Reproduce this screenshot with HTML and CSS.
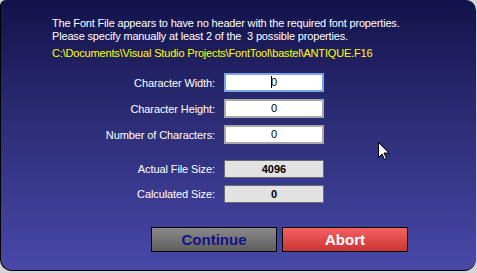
FILE: index.html
```html
<!DOCTYPE html>
<html lang="en">
<head>
  <meta charset="UTF-8">
  <title>Font File Properties</title>
  <link rel="stylesheet" href="styles.css">
</head>
<body>
  <div class='window'>
    <div class='message'>
      <p>The Font File appears to have no header with the required font properties.<br>Please specify manually at least 2 of the&nbsp; 3 possible properties.</p>
      <p class='path'>C:\Documents\Visual Studio Projects\FontTool\bastel\ANTIQUE.F16</p>
    </div>
    <div class='fields'>
      <label>Character Width:</label>
      <div class='input focus'><span class='caret'></span>0</div>
      <label>Character Height:</label>
      <div class='input'>0</div>
      <label>Number of Characters:</label>
      <div class='input'>0</div>
    </div>
    <div class='fields sizes'>
      <label>Actual File Size:</label>
      <div class='readout'>4096</div>
      <label>Calculated Size:</label>
      <div class='readout'>0</div>
    </div>
    <div class='buttons'>
      <button class='btn continue'>Continue</button>
      <button class='btn abort'>Abort</button>
    </div>
    <svg class='cursor' width='12' height='19' viewBox='0 0 12 19'>
      <path d='M0.5 0.5 L0.5 15.5 L4 12 L6.5 17.5 L8.5 16.5 L6 11 L11 11 Z' fill='#fff' stroke='#000' stroke-width='1'/>
    </svg>
  </div>
</body>
</html>
```

FILE: styles.css
```css
body { margin: 0; background: #d4d4d4; width: 477px; height: 273px; overflow: hidden; font-family: "Liberation Sans", Arial, sans-serif; }
.window { position: relative; width: 476px; height: 271px; border-left: 1px solid #000; border-bottom: 1px solid #000; border-radius: 6px 10px 12px 12px; background: linear-gradient(#12124a, #2a2a72 40%, #4848aa); box-sizing: border-box; padding-top: 17px; }
.message { padding-left: 51px; color: #fff; font-size: 11px; line-height: 13px; letter-spacing: -0.17px; }
.message p { margin: 0; }
.message .path { color: #ffff00; margin-top: 4px; }
.fields { display: grid; grid-template-columns: 163px 100px; column-gap: 9px; row-gap: 7px; padding-left: 51px; margin-top: 13px; align-items: center; }
.fields label { color: #fff; font-size: 11px; text-align: right; letter-spacing: -0.1px; }
.input { height: 19px; box-sizing: border-box; border: 2px solid #a8a8a8; background: #fff; font-size: 11px; text-align: center; line-height: 15px; color: #000; }
.input.focus { border-color: #7ba4e4; }
.caret { display: inline-block; width: 1px; height: 12px; background: #000; vertical-align: -2px; margin-right: -1px; }
.sizes { margin-top: 16px; row-gap: 7px; }
.readout { height: 18px; box-sizing: border-box; border: 1px solid #6a6a6a; background: #e2e2e2; font-size: 11px; font-weight: bold; text-align: center; line-height: 16px; color: #000; }
.buttons { display: flex; gap: 5px; padding-left: 150px; margin-top: 24px; }
.btn { width: 126px; height: 25px; border: 1px solid #000; font-family: "Liberation Sans", Arial, sans-serif; font-size: 15px; font-weight: bold; padding: 0; }
.continue { background: linear-gradient(#8a8a8a, #5e5e5e); color: #13138a; }
.abort { background: linear-gradient(#f66060, #cc3434); color: #fff; }
.cursor { position: absolute; left: 377px; top: 142px; }
```
